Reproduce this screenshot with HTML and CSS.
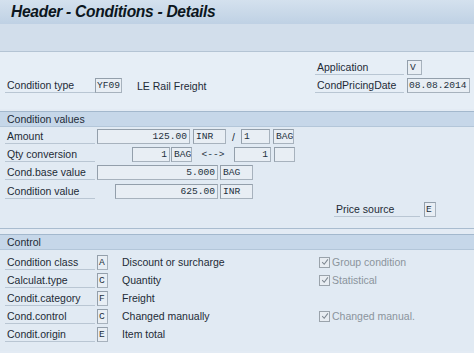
FILE: index.html
```html
<!DOCTYPE html>
<html>
<head>
<meta charset="utf-8">
<link rel="stylesheet" href="styles.css">
</head>
<body>
<div class="title">Header - Conditions - Details</div>
<div class="toolbar"></div>
<div class="head">
  <div class="head-left">
    <div class="row">
      <span class="lbl">Condition type</span>
      <span class="fld mono w26">YF09</span>
      <span class="txt desc1">LE Rail Freight</span>
    </div>
  </div>
  <div class="head-right">
    <div class="row">
      <span class="lbl lbl-r">Application</span>
      <span class="fld mono w15">V</span>
    </div>
    <div class="row">
      <span class="lbl lbl-r">CondPricingDate</span>
      <span class="fld mono w62">08.08.2014</span>
    </div>
  </div>
</div>

<div class="section sec1">
  <div class="sec-head">Condition values</div>
  <div class="sec-body">
    <div class="row">
      <span class="lbl">Amount</span>
      <span class="fld mono num w93 ml2">125.00</span>
      <span class="fld mono w33 ml3">INR</span>
      <span class="txt slash">/</span>
      <span class="fld mono w29">1</span>
      <span class="fld mono w20 ml3">BAG</span>
    </div>
    <div class="row">
      <span class="lbl">Qty conversion</span>
      <span class="fld mono num w38 ml37">1</span>
      <span class="fld mono w20 ml1">BAG</span>
      <span class="txt mono arrow">&lt;--&gt;</span>
      <span class="fld mono num w37">1</span>
      <span class="fld mono w20 ml3"></span>
    </div>
    <div class="row">
      <span class="lbl">Cond.base value</span>
      <span class="fld mono num w121 ml2">5.000</span>
      <span class="fld mono w33 ml2">BAG</span>
    </div>
    <div class="row">
      <span class="lbl">Condition value</span>
      <span class="fld mono num w103 ml20">625.00</span>
      <span class="fld mono w33 ml2">INR</span>
    </div>
    <div class="row">
      <span class="lbl lbl-ps">Price source</span>
      <span class="fld mono w12 ml4">E</span>
    </div>
  </div>
</div>

<div class="section sec2">
  <div class="sec-head">Control</div>
  <div class="sec-body ctrl">
    <div class="row">
      <span class="lbl">Condition class</span>
      <span class="fld mono w11 ml2">A</span>
      <span class="txt cdesc">Discount or surcharge</span>
      <span class="chk"><span class="box"><svg viewBox="0 0 10 10" width="8" height="8"><path d="M1.5 5.2 L4 7.8 L8.6 1.8" fill="none" stroke="#7d8790" stroke-width="1.3"/></svg></span>Group condition</span>
    </div>
    <div class="row">
      <span class="lbl">Calculat.type</span>
      <span class="fld mono w11 ml2">C</span>
      <span class="txt cdesc">Quantity</span>
      <span class="chk"><span class="box"><svg viewBox="0 0 10 10" width="8" height="8"><path d="M1.5 5.2 L4 7.8 L8.6 1.8" fill="none" stroke="#7d8790" stroke-width="1.3"/></svg></span>Statistical</span>
    </div>
    <div class="row">
      <span class="lbl">Condit.category</span>
      <span class="fld mono w11 ml2">F</span>
      <span class="txt cdesc">Freight</span>
    </div>
    <div class="row">
      <span class="lbl">Cond.control</span>
      <span class="fld mono w11 ml2">C</span>
      <span class="txt cdesc">Changed manually</span>
      <span class="chk"><span class="box"><svg viewBox="0 0 10 10" width="8" height="8"><path d="M1.5 5.2 L4 7.8 L8.6 1.8" fill="none" stroke="#7d8790" stroke-width="1.3"/></svg></span>Changed manual.</span>
    </div>
    <div class="row">
      <span class="lbl">Condit.origin</span>
      <span class="fld mono w11 ml2">E</span>
      <span class="txt cdesc">Item total</span>
    </div>
  </div>
</div>
</body>
</html>
```

FILE: styles.css
```css
html, body {
  margin: 0;
  padding: 0;
}
body {
  width: 474px;
  height: 353px;
  overflow: hidden;
  background: #e3ebf4;
  font-family: "Liberation Sans", Arial, sans-serif;
  font-size: 10.5px;
  color: #1d2a36;
}
.title {
  height: 24px;
  box-sizing: border-box;
  padding: 3px 0 0 11px;
  background: linear-gradient(#d4e1ee, #bfd1e4);
  font-family: "Liberation Sans", Arial, sans-serif;
  font-weight: bold;
  font-style: italic;
  font-size: 15.6px;
  letter-spacing: -0.3px;
  line-height: 18px;
  color: #0c1620;
}
.toolbar {
  height: 27px;
  background: #d2deeb;
  border-bottom: 1px solid #b4c4d4;
}
.head {
  display: flex;
  justify-content: space-between;
  height: 57px;
  box-sizing: border-box;
  padding: 7px 0 0 0;
  background: #e6eef6;
}
.head-left {
  display: flex;
  flex-direction: column;
  justify-content: flex-start;
  padding-top: 19px;
}
.head-right {
  display: flex;
  flex-direction: column;
  gap: 3px;
  padding-top: 1px;
  padding-right: 4px;
}
.row {
  display: flex;
  align-items: center;
  height: 15px;
}
.lbl {
  box-sizing: border-box;
  width: 90px;
  height: 15px;
  margin-left: 5px;
  padding-left: 2px;
  line-height: 14px;
  border-bottom: 1px solid #b9c6d3;
  white-space: nowrap;
}
.lbl-r {
  margin-left: 0;
  width: 89px;
  margin-right: 3px;
}
.lbl-ps {
  margin-left: 334px;
  width: 86px;
}
.fld {
  box-sizing: border-box;
  height: 15px;
  border: 1px solid #a7b2bd;
  border-top-color: #939fab;
  border-left-color: #939fab;
  background: #e8eef4;
  line-height: 13px;
  padding: 0 2px;
  white-space: nowrap;
  overflow: hidden;
}
.mono {
  font-family: "Liberation Mono", "DejaVu Sans Mono", monospace;
  font-size: 9.6px;
  color: #24313d;
}
.num { text-align: right; }
.txt { white-space: nowrap; }
.desc1 { margin-left: 15px; }
.w11 { width: 11px; padding: 0 1px; }
.w12 { width: 12px; padding: 0 1px; }
.w15 { width: 15px; }
.w20 { width: 21px; }
.w26 { width: 27px; padding: 0 1px; }
.w29 { width: 29px; }
.w33 { width: 33px; }
.w37 { width: 37px; }
.w38 { width: 38px; }
.w62 { width: 63px; padding: 0 1px; }
.w93 { width: 93px; }
.w103 { width: 103px; }
.w121 { width: 121px; }
.ml1 { margin-left: 1px; }
.ml2 { margin-left: 2px; }
.ml3 { margin-left: 3px; }
.ml4 { margin-left: 4px; }
.ml20 { margin-left: 20px; }
.ml37 { margin-left: 37px; }
.slash { width: 15px; text-align: center; }
.arrow { width: 42px; text-align: center; }
.section {
  border-top: 1px solid #a3b8cd;
}
.sec1 { margin-top: 2px; }
.sec2 { margin-top: 5px; }
.sec-head {
  height: 14px;
  line-height: 14px;
  padding-left: 7px;
  background: #c6d7e9;
  border-bottom: 1px solid #b3c6d9;
}
.sec-body {
  display: flex;
  flex-direction: column;
  gap: 3.2px;
  padding: 2px 0 11px 0;
  background: #e1eaf3;
  border-bottom: 1px solid #a9bccf;
}
.ctrl {
  box-sizing: border-box;
  padding: 5px 0 0 0;
  gap: 3px;
  border-bottom: none;
  height: 101px;
  overflow: hidden;
}
.cdesc {
  margin-left: 14px;
  width: 197px;
}
.chk {
  display: flex;
  align-items: center;
  color: #8b949c;
  white-space: nowrap;
}
.box {
  box-sizing: border-box;
  width: 11px;
  height: 11px;
  border: 1px solid #9aa3ab;
  background: #e8edf2;
  margin-right: 2px;
  display: flex;
  align-items: center;
  justify-content: center;
}
```
